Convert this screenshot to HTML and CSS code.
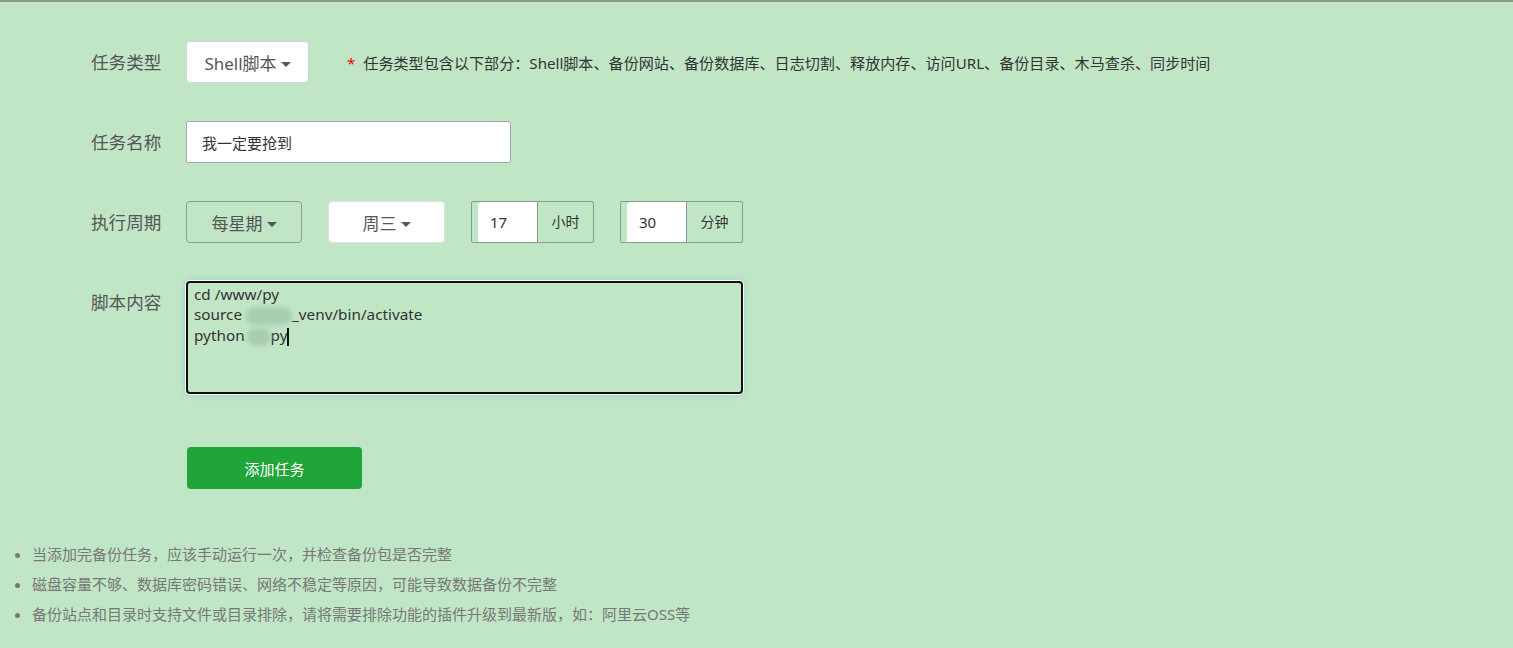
FILE: index.html
```html
<!DOCTYPE html>
<html lang="zh-CN">

<head>
  <meta charset="UTF-8">
  <meta name="viewport" content="width=device-width, initial-scale=1.0">
  <title>添加计划任务</title>
  <link rel="stylesheet" href="styles.css">
</head>

<body>
  <div class="page">
    <form class="crontab">
      <div class="line">
        <span class="tname">任务类型</span>
        <div class="info">
          <button type="button" class="btn btn-white">Shell脚本<span class="caret"></span></button>
          <span class="tips"><em>*</em>任务类型包含以下部分：Shell脚本、备份网站、备份数据库、日志切割、释放内存、访问URL、备份目录、木马查杀、同步时间</span>
        </div>
      </div>
      <div class="line">
        <span class="tname">任务名称</span>
        <div class="info">
          <input type="text" class="bt-input" value="我一定要抢到">
        </div>
      </div>
      <div class="line">
        <span class="tname">执行周期</span>
        <div class="info">
          <button type="button" class="btn btn-plain cycle">每星期<span class="caret"></span></button>
          <button type="button" class="btn btn-white week">周三<span class="caret"></span></button>
          <div class="input-group">
            <input type="text" value="17">
            <span class="addon">小时</span>
          </div>
          <div class="input-group">
            <input type="text" value="30">
            <span class="addon">分钟</span>
          </div>
        </div>
      </div>
      <div class="line">
        <span class="tname">脚本内容</span>
        <div class="info">
          <div class="script-box">
            <div>cd /www/py</div>
            <div>source <span class="mask mask-wide"></span>_venv/bin/activate</div>
            <div>python <span class="mask mask-small"></span>py<span class="cursor"></span></div>
          </div>
        </div>
      </div>
      <div class="submit">
        <button type="button" class="btn btn-success">添加任务</button>
      </div>
    </form>

    <ul class="help">
      <li>当添加完备份任务，应该手动运行一次，并检查备份包是否完整</li>
      <li>磁盘容量不够、数据库密码错误、网络不稳定等原因，可能导致数据备份不完整</li>
      <li>备份站点和目录时支持文件或目录排除，请将需要排除功能的插件升级到最新版，如：阿里云OSS等</li>
    </ul>
  </div>
</body>

</html>
```

FILE: styles.css
```css
body {
  margin: 0;
  padding: 0;
  background: #c1e6c6;
  font-family: "Noto Sans", "Noto Sans CJK SC", sans-serif;
  color: #444;
}

.page {
  border-top: 2px solid #8a9b8d;
  padding-top: 39px;
}

.crontab {
  padding-left: 91px;
}

.line {
  display: flex;
  align-items: flex-start;
  margin-bottom: 38px;
}

.tname {
  width: 95px;
  flex: none;
  line-height: 42px;
  font-size: 17.6px;
  color: #555;
}

.info {
  display: flex;
  align-items: center;
  gap: 26px;
}

.btn {
  height: 42px;
  border-radius: 4px;
  font-family: inherit;
  font-size: 17px;
  color: #555;
  padding: 0 12px;
  cursor: pointer;
}

.btn-white {
  background: #fff;
  border: 1px solid #d4d4d4;
  width: 123px;
}

.btn-plain {
  background: transparent;
  border: 1px solid #8a9b8d;
}

.cycle {
  width: 116px;
}

.week {
  width: 117px;
  border-color: #e0e0e0;
}

.caret {
  display: inline-block;
  vertical-align: middle;
  margin-left: 4px;
  border-top: 5px solid #555;
  border-left: 5px solid transparent;
  border-right: 5px solid transparent;
}

.tips {
  margin-left: 12px;
  font-size: 15.1px;
  color: #333;
}

.tips em {
  font-style: normal;
  color: red;
  margin-right: 8px;
}

.bt-input {
  box-sizing: border-box;
  width: 325px;
  height: 42px;
  border: 1px solid #a8a8a8;
  border-radius: 2px;
  padding: 0 15px;
  font-family: inherit;
  font-size: 15px;
  color: #333;
}

.input-group {
  display: flex;
  height: 42px;
  box-sizing: border-box;
  border: 1px solid #8a9b8d;
  border-radius: 2px;
}

.input-group input {
  box-sizing: border-box;
  width: 60px;
  margin-left: 6px;
  border: 0;
  border-radius: 4px 0 0 0;
  border-right: 1px solid #8a9b8d;
  padding: 0 12px;
  font-family: inherit;
  font-size: 15px;
  color: #333;
}

.addon {
  width: 55px;
  line-height: 40px;
  text-align: center;
  font-size: 14px;
  color: #333;
}

.script-box {
  box-sizing: border-box;
  width: 557px;
  height: 113px;
  border: 2px solid #111;
  border-radius: 4px;
  box-shadow: 0 0 0 1px #fff, 0 0 6px 2px rgba(150, 200, 215, 0.6);
  padding: 1px 6px;
  font-size: 15.3px;
  line-height: 20.4px;
  color: #333;
}

.mask {
  display: inline-block;
  vertical-align: middle;
  height: 18px;
  border-radius: 9px;
  background: #a9cdaf;
  filter: blur(2px);
}

.mask-wide {
  width: 46px;
}

.mask-small {
  width: 24px;
  margin-left: -2px;
}

.cursor {
  display: inline-block;
  vertical-align: middle;
  width: 2px;
  height: 18px;
  background: #111;
}

.submit {
  padding-left: 96px;
  margin-top: 16px;
  padding-top: 15px;
}

.btn-success {
  width: 175px;
  background: #20a53a;
  border: 0;
  color: #fff;
  font-size: 15px;
}

.help {
  margin: 50px 0 0;
  padding-left: 32px;
  font-size: 15px;
  line-height: 30px;
  color: #777;
}
```
